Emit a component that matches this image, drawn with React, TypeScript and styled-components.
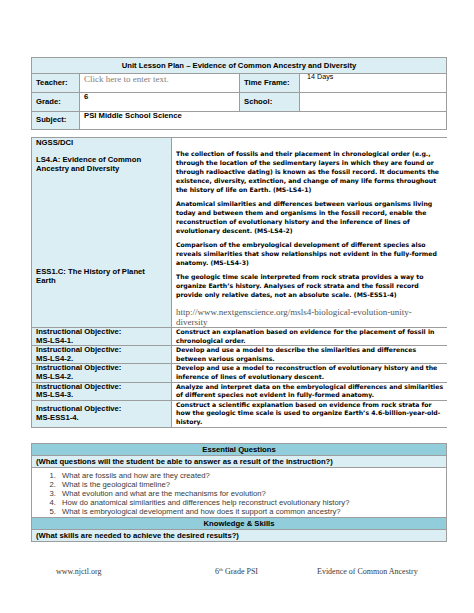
import React from "react";
import styled, { createGlobalStyle } from "styled-components";

const BORDER = "#9d9d9d";
const LIGHT = "#daeef3";
const MID = "#92cddc";

const GlobalStyle = createGlobalStyle`
  html, body { margin: 0; padding: 0; background: #ffffff; }
  body { font-family: "Liberation Sans", Arial, sans-serif; color: #000000; }
  * { box-sizing: border-box; }
`;

const Page = styled.div`
  width: 474px;
  height: 613px;
  padding: 57px 0 0 31px;
  display: flex;
  flex-direction: column;
  overflow: hidden;
`;

/* ---------- Table 1 ---------- */
const InfoTable = styled.div`
  width: 416px;
  display: grid;
  grid-template-columns: 47px 159px 59px 1fr;
  grid-template-rows: 15px 18px 18px 17px;
  gap: 1px;
  padding: 1px;
  background: ${BORDER};
`;

const TitleCell = styled.div`
  grid-column: 1 / -1;
  background: ${LIGHT};
  display: flex;
  align-items: center;
  justify-content: center;
  font-weight: 700;
  font-size: 7.7px;
  line-height: 9px;
  white-space: nowrap;
`;

const LabelCell = styled.div`
  background: ${LIGHT};
  display: flex;
  align-items: center;
  padding: 0 4px 2px;
  font-weight: 700;
  font-size: 7.7px;
  line-height: 9px;
  white-space: nowrap;
`;

const ValueCell = styled.div<{ $span?: number; $kind?: "bold" | "placeholder" | "plain"; $indent?: number }>`
  background: #ffffff;
  grid-column: span ${(p) => p.$span ?? 1};
  padding: 0 4px 0 ${(p) => p.$indent ?? 4}px;
  white-space: nowrap;
  font-family: ${(p) =>
    p.$kind === "placeholder" ? `"Liberation Serif", "Times New Roman", serif` : `"Liberation Sans", Arial, sans-serif`};
  font-weight: ${(p) => (p.$kind === "bold" ? 700 : 400)};
  font-size: ${(p) => (p.$kind === "placeholder" ? 9 : p.$kind === "plain" ? 7.2 : 7.7)}px;
  line-height: ${(p) => (p.$kind === "placeholder" ? 10 : p.$kind === "plain" ? 6.5 : 7)}px;
  color: ${(p) => (p.$kind === "placeholder" ? "#808080" : "#000000")};
`;

/* ---------- Table 2 ---------- */
const StandardsTable = styled.div`
  margin-top: 7px;
  width: 416px;
  display: grid;
  grid-template-columns: 139px 1fr;
  gap: 1px;
  padding: 1px;
  background: ${BORDER};
`;

const SideCell = styled.div<{ $center?: boolean }>`
  background: ${LIGHT};
  padding: ${(p) => (p.$center ? "0 4px" : "1px 4px 0")};
  display: flex;
  flex-direction: column;
  justify-content: ${(p) => (p.$center ? "center" : "flex-start")};
`;

const SideText = styled.div<{ $mt?: number; $lh?: number }>`
  margin-top: ${(p) => p.$mt ?? 0}px;
  font-weight: 700;
  font-size: 7.7px;
  line-height: ${(p) => p.$lh ?? 8.9}px;
  white-space: nowrap;
`;

const MainCell = styled.div<{ $top?: number }>`
  background: #ffffff;
  padding: ${(p) => p.$top ?? 0}px 4px 0;
`;

const Desc = styled.p<{ $mt?: number; $lh?: number }>`
  margin: ${(p) => p.$mt ?? 0}px 0 0;
  font-family: "DejaVu Sans", Verdana, sans-serif;
  font-weight: 700;
  font-size: 6.2px;
  line-height: ${(p) => p.$lh ?? 9}px;
  white-space: nowrap;
`;

const Line = styled.span`
  display: block;
`;

const Url = styled.p`
  margin: 9px 0 0;
  font-family: "Liberation Serif", "Times New Roman", serif;
  font-size: 9px;
  line-height: 9.5px;
  color: #555555;
  white-space: nowrap;
`;

/* ---------- Table 3 ---------- */
const QuestionsTable = styled.div`
  margin-top: 15px;
  width: 416px;
  display: grid;
  grid-template-columns: 1fr;
  gap: 1px;
  padding: 1px;
  background: ${BORDER};
`;

const Band = styled.div<{ $h: number }>`
  height: ${(p) => p.$h}px;
  background: ${MID};
  display: flex;
  align-items: center;
  justify-content: center;
  font-weight: 700;
  font-size: 7.7px;
  line-height: 9px;
  white-space: nowrap;
`;

const SubBand = styled.div`
  height: 11px;
  background: ${LIGHT};
  display: flex;
  align-items: center;
  padding: 0 4px;
  font-weight: 700;
  font-size: 7.7px;
  line-height: 9px;
  white-space: nowrap;
`;

const ListBody = styled.ol`
  margin: 0;
  background: #ffffff;
  padding: 4px 0 0 14px;
  list-style: none;
`;

const ListItem = styled.li`
  display: grid;
  grid-template-columns: 10px 1fr;
  column-gap: 6px;
  font-size: 7.7px;
  line-height: 8.9px;
  color: #3a3a3a;
  white-space: nowrap;
`;

const Num = styled.span`
  text-align: right;
`;

/* ---------- Footer ---------- */
const Footer = styled.div`
  margin-top: 25px;
  padding-left: 25px;
  display: grid;
  grid-template-columns: 159px 102px auto;
  font-family: "Liberation Serif", "Times New Roman", serif;
  font-size: 8px;
  line-height: 10px;
  color: #3a3a3a;
  white-space: nowrap;
`;

const Sup = styled.sup`
  font-size: 5px;
  line-height: 0;
  vertical-align: 3px;
`;

const paragraphs: string[][] = [
  [
    "The collection of fossils and their placement in chronological order (e.g.,",
    "through the location of the sedimentary layers in which they are found or",
    "through radioactive dating) is known as the fossil record. It documents the",
    "existence, diversity, extinction, and change of many life forms throughout",
    "the history of life on Earth. (MS-LS4-1)",
  ],
  [
    "Anatomical similarities and differences between various organisms living",
    "today and between them and organisms in the fossil record, enable the",
    "reconstruction of evolutionary history and the inference of lines of",
    "evolutionary descent. (MS-LS4-2)",
  ],
  [
    "Comparison of the embryological development of different species also",
    "reveals similarities that show relationships not evident in the fully-formed",
    "anatomy. (MS-LS4-3)",
  ],
  [
    "The geologic time scale interpreted from rock strata provides a way to",
    "organize Earth\u2019s history. Analyses of rock strata and the fossil record",
    "provide only relative dates, not an absolute scale. (MS-ESS1-4)",
  ],
];

const objectives: { code: string; lines: string[] }[] = [
  {
    code: "MS-LS4-1.",
    lines: [
      "Construct an explanation based on evidence for the placement of fossil in",
      "chronological order.",
    ],
  },
  {
    code: "MS-LS4-2.",
    lines: [
      "Develop and use a model to describe the similarities and differences",
      "between various organisms.",
    ],
  },
  {
    code: "MS-LS4-2.",
    lines: [
      "Develop and use a model to reconstruction of evolutionary history and the",
      "inference of lines of evolutionary descent.",
    ],
  },
  {
    code: "MS-LS4-3.",
    lines: [
      "Analyze and interpret data on the embryological differences and similarities",
      "of different species not evident in fully-formed anatomy.",
    ],
  },
  {
    code: "MS-ESS1-4.",
    lines: [
      "Construct a scientific explanation based on evidence from rock strata for",
      "how the geologic time scale is used to organize Earth\u2019s 4.6-billion-year-old-",
      "history.",
    ],
  },
];

const questions = [
  "What are fossils and how are they created?",
  "What is the geological timeline?",
  "What evolution and what are the mechanisms for evolution?",
  "How do anatomical similarities and differences help reconstruct evolutionary history?",
  "What is embryological development and how does it support a common ancestry?",
];

export default function App() {
  return (
    <>
      <GlobalStyle />
      <Page>
        <InfoTable>
          <TitleCell>Unit Lesson Plan – Evidence of Common Ancestry and Diversity</TitleCell>
          <LabelCell>Teacher:</LabelCell>
          <ValueCell $kind="placeholder">Click here to enter text.</ValueCell>
          <LabelCell>Time Frame:</LabelCell>
          <ValueCell $kind="plain" $indent={7}>14 Days</ValueCell>
          <LabelCell>Grade:</LabelCell>
          <ValueCell $kind="bold">6</ValueCell>
          <LabelCell>School:</LabelCell>
          <ValueCell />
          <LabelCell>Subject:</LabelCell>
          <ValueCell $kind="bold" $span={3}>PSI Middle School Science</ValueCell>
        </InfoTable>

        <StandardsTable>
          <SideCell>
            <SideText>NGSS/DCI</SideText>
            <SideText $mt={8}>
              <Line>LS4.A: Evidence of Common</Line>
              <Line>Ancestry and Diversity</Line>
            </SideText>
            <SideText $mt={94}>
              <Line>ESS1.C: The History of Planet</Line>
              <Line>Earth</Line>
            </SideText>
          </SideCell>
          <MainCell $top={11}>
            {paragraphs.map((p, i) => (
              <Desc key={i} $mt={i === 0 ? 0 : 5}>
                {p.map((l) => (
                  <Line key={l}>{l}</Line>
                ))}
              </Desc>
            ))}
            <Url>
              <Line>http://www.nextgenscience.org/msls4-biological-evolution-unity-</Line>
              <Line>diversity</Line>
            </Url>
          </MainCell>

          {objectives.map((o, i) => (
            <React.Fragment key={i}>
              <SideCell $center>
                <SideText $lh={8.6}>
                  <Line>Instructional Objective:</Line>
                  <Line>{o.code}</Line>
                </SideText>
              </SideCell>
              <MainCell>
                <Desc $lh={8.6}>
                  {o.lines.map((l) => (
                    <Line key={l}>{l}</Line>
                  ))}
                </Desc>
              </MainCell>
            </React.Fragment>
          ))}
        </StandardsTable>

        <QuestionsTable>
          <Band $h={11.5}>Essential Questions</Band>
          <SubBand>(What questions will the student be able to answer as a result of the instruction?)</SubBand>
          <ListBody>
            {questions.map((q, i) => (
              <ListItem key={q}>
                <Num>{i + 1}.</Num>
                <span>{q}</span>
              </ListItem>
            ))}
          </ListBody>
          <Band $h={11}>Knowledge &amp; Skills</Band>
          <SubBand>(What skills are needed to achieve the desired results?)</SubBand>
        </QuestionsTable>

        <Footer>
          <span>www.njctl.org</span>
          <span>
            6<Sup>th</Sup> Grade PSI
          </span>
          <span>Evidence of Common Ancestry</span>
        </Footer>
      </Page>
    </>
  );
}
